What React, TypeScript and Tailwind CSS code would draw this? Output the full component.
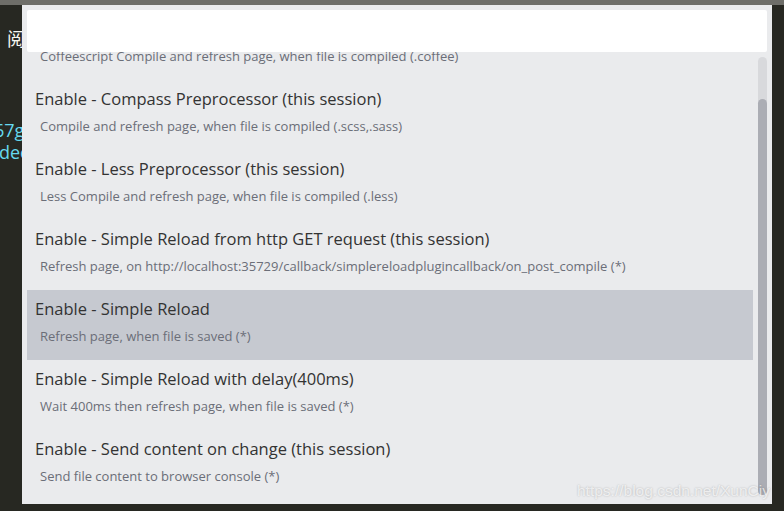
import React from 'react';

const items = [
  { title: 'Enable - Coffeescript Preprocessor (this session)', desc: 'Coffeescript Compile and refresh page, when file is compiled (.coffee)' },
  { title: 'Enable - Compass Preprocessor (this session)', desc: 'Compile and refresh page, when file is compiled (.scss,.sass)' },
  { title: 'Enable - Less Preprocessor (this session)', desc: 'Less Compile and refresh page, when file is compiled (.less)' },
  { title: 'Enable - Simple Reload from http GET request (this session)', desc: 'Refresh page, on http://localhost:35729/callback/simplereloadplugincallback/on_post_compile (*)' },
  { title: 'Enable - Simple Reload', desc: 'Refresh page, when file is saved (*)', active: true },
  { title: 'Enable - Simple Reload with delay(400ms)', desc: 'Wait 400ms then refresh page, when file is saved (*)' },
  { title: 'Enable - Send content on change (this session)', desc: 'Send file content to browser console (*)' },
];

export default function App() {
  return (
    <div className="relative w-[784px] h-[511px] bg-[#272822] overflow-hidden font-['Open_Sans',sans-serif]">
      <div className="h-[5px] bg-[#6e6e69]" />
      <div className="flex">
        <div className="w-[22px] shrink-0 overflow-hidden text-[18px] leading-[22px]">
          <div className="pt-[22px] pl-[7px] text-[#f8f8f2] font-['Noto_Sans_CJK_SC',sans-serif]">阅</div>
          <div className="mt-[70px] text-[#66d9ef] whitespace-nowrap -ml-[6px]">67g</div>
          <div className="text-[#66d9ef] whitespace-nowrap -ml-[1px]">dec</div>
        </div>
        <div className="w-[750px] h-[499px] bg-[#eaebed] p-[5px] flex flex-col">
          <div className="h-[42px] bg-white rounded-[2px] shrink-0" />
          <div className="flex flex-1 min-h-0 gap-[5px]">
            <div className="flex-1 overflow-hidden">
              <div className="-mt-[42px]">
                {items.map((it) => (
                  <div
                    key={it.title}
                    className={`h-[70px] pl-[8px] pt-[8px] ${it.active ? 'bg-[#c6c9d0]' : ''}`}
                  >
                    <div className="text-[16.5px] leading-[22px] text-[#333333] whitespace-nowrap">{it.title}</div>
                    <div className="mt-[7px] pl-[5px] text-[13px] leading-[18px] text-[#6b6e78] whitespace-nowrap">{it.desc}</div>
                  </div>
                ))}
              </div>
            </div>
            <div className="w-[9px] mt-[5px] mb-[4px] rounded-full bg-[#d8d9dc] flex flex-col">
              <div className="h-[42px]" />
              <div className="flex-1 rounded-full bg-[#abadb4]" />
            </div>
          </div>
        </div>
      </div>
      <div className="absolute left-[577px] top-[479px] text-[15.5px] text-white/70 font-['Liberation_Sans',sans-serif] [text-shadow:0_0_2px_rgba(0,0,0,0.25)]">
        https://blog.csdn.net/XunCiy
      </div>
    </div>
  );
}
